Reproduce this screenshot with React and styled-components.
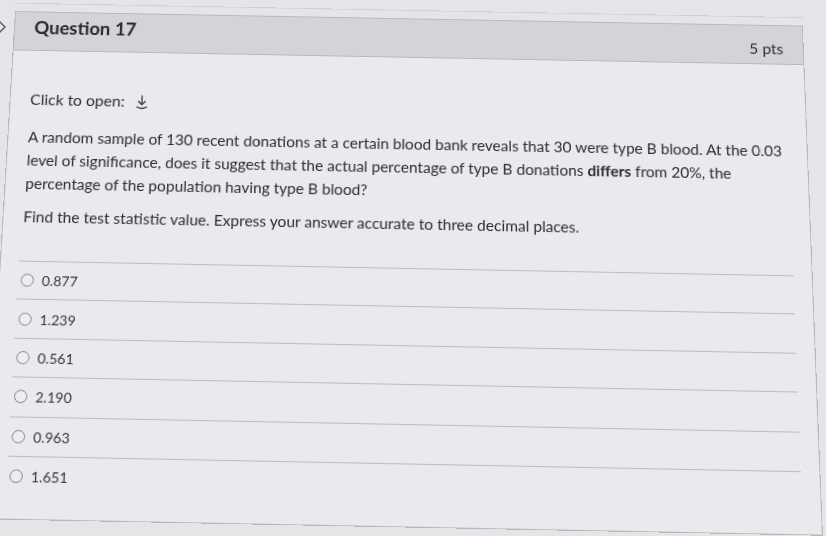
import styled, { createGlobalStyle } from "styled-components";

const GlobalStyle = createGlobalStyle`
  html, body {
    margin: 0;
    padding: 0;
    background: #e6e4e9;
  }
  body {
    font-family: Lato, "Open Sans", "Liberation Sans", sans-serif;
    color: #2e2d33;
  }
`;

const Page = styled.div`
  position: relative;
  width: 826px;
  height: 536px;
  overflow: hidden;
  background: #e6e4e9;
`;

const Chevron = styled.svg`
  position: absolute;
  left: 0;
  top: 19px;
`;

// the screenshot is a photo taken at a slight angle, so the sheet is tilted a bit
const Sheet = styled.div`
  width: 812px;
  transform: perspective(1000px) rotateX(7deg) skewY(1.1deg) skewX(-0.6deg);
  transform-origin: 50% 50%;
`;

const TopEdge = styled.div`
  height: 1px;
  background: #d2d0d6;
  margin-bottom: 8px;
`;

const Card = styled.div`
  background: #ebe9ee;
  border: 1px solid #b9b7bd;
  box-sizing: border-box;
`;

const Header = styled.div`
  height: 41px;
  box-sizing: border-box;
  background: #d5d3d8;
  border-bottom: 1px solid #b9b7bd;
  padding: 0 20px;
  display: flex;
  justify-content: space-between;
`;

const Title = styled.div`
  align-self: flex-start;
  padding-top: 5px;
  font-size: 19px;
  line-height: 22px;
  font-weight: 700;
  color: #2a292f;
`;

const Points = styled.div`
  align-self: flex-end;
  padding-bottom: 6px;
  font-size: 16px;
  line-height: 20px;
  color: #2e2d33;
`;

const Body = styled.div`
  padding: 39px 20px 33px;
`;

const Prompt = styled.div`
  display: flex;
  align-items: center;
  gap: 11px;
  font-size: 16px;
  line-height: 24px;
`;

const Text = styled.p`
  margin: ${(p) => p.$gap || 0}px 0 0;
  font-size: 15.6px;
  line-height: 24px;
  color: #2e2d33;
  b {
    font-weight: 700;
  }
`;

const Answers = styled.div`
  margin: 0 18px;
`;

const Answer = styled.label`
  display: flex;
  align-items: center;
  height: ${(p) => (p.$last ? 60 : 38.4)}px;
  padding-bottom: ${(p) => (p.$last ? 21 : 0)}px;
  box-sizing: border-box;
  border-top: 1px solid #bebcc2;
  padding-left: 3px;
  font-size: 14px;
  color: #37363c;
`;

const Radio = styled.span`
  width: 13px;
  height: 13px;
  box-sizing: border-box;
  border: 1px solid #86848a;
  border-radius: 50%;
  margin-right: 8px;
  background: #eeedf1;
`;

const DownloadIcon = () => (
  <svg width="14" height="17" viewBox="0 0 14 17" fill="none" stroke="#3a3940" strokeWidth="1.3" strokeLinecap="round" strokeLinejoin="round">
    <path d="M7 2.5V11.5" />
    <path d="M3.6 8.2L7 11.5L10.4 8.2" />
    <path d="M2 14Q7 17 12 14" />
  </svg>
);

const options = ["0.877", "1.239", "0.561", "2.190", "0.963", "1.651"];

export default function App() {
  return (
    <Page>
      <GlobalStyle />
      <Chevron width="8" height="16" viewBox="0 0 8 16" fill="none" stroke="#5a595f" strokeWidth="1.4">
        <polyline points="-2,1 5,8 -2,15" />
      </Chevron>
      <Sheet>
        <TopEdge />
        <Card>
          <Header>
            <Title>Question 17</Title>
            <Points>5 pts</Points>
          </Header>
          <Body>
            <Prompt>
              Click to open: <DownloadIcon />
            </Prompt>
            <Text $gap={15}>
              A random sample of 130 recent donations at a certain blood bank reveals that 30 were type B blood. At the 0.03
              level of significance, does it suggest that the actual percentage of type B donations <b>differs</b> from 20%, the
              percentage of the population having type B blood?
            </Text>
            <Text $gap={10}>
              Find the test statistic value. Express your answer accurate to three decimal places.
            </Text>
          </Body>
          <Answers>
            {options.map((o, i) => (
              <Answer key={o} $last={i === options.length - 1}>
                <Radio />
                {o}
              </Answer>
            ))}
          </Answers>
        </Card>
      </Sheet>
    </Page>
  );
}
